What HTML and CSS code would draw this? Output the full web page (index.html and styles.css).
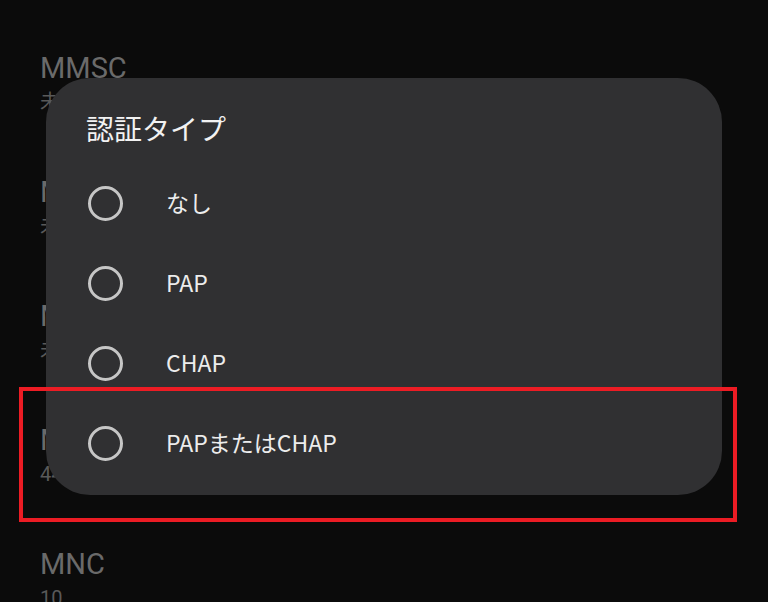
FILE: index.html
```html
<!DOCTYPE html>
<html lang="ja">
<head>
<meta charset="utf-8">
<link rel="stylesheet" href="styles.css">
</head>
<body>
<div class="screen">
  <ul class="settings">
    <li class="setting"><div class="label">MMSC</div><div class="value">未設定</div></li>
    <li class="setting"><div class="label">MMSプロキシ</div><div class="value">未設定</div></li>
    <li class="setting"><div class="label">MMSポート</div><div class="value">未設定</div></li>
    <li class="setting"><div class="label">MCC</div><div class="value">440</div></li>
    <li class="setting"><div class="label">MNC</div><div class="value">10</div></li>
  </ul>

  <div class="dialog">
    <h2 class="dialog-title">認証タイプ</h2>
    <ul class="options">
      <li class="option"><span class="radio"></span><span class="option-text">なし</span></li>
      <li class="option"><span class="radio"></span><span class="option-text">PAP</span></li>
      <li class="option"><span class="radio"></span><span class="option-text">CHAP</span></li>
      <li class="option"><span class="radio"></span><span class="option-text">PAPまたはCHAP</span></li>
    </ul>
  </div>

  <div class="highlight"></div>
</div>
</body>
</html>
```

FILE: styles.css
```css
* { box-sizing: border-box; }

html, body {
  margin: 0;
  padding: 0;
  background: #0b0b0b;
}

.screen {
  position: relative;
  width: 768px;
  height: 602px;
  overflow: hidden;
  background: #0b0b0b;
  font-family: Roboto, "Noto Sans CJK JP", sans-serif;
}

.settings {
  list-style: none;
  margin: 0;
  padding: 50px 0 0 40px;
  display: flex;
  flex-direction: column;
}

.setting {
  height: 124px;
}

.label {
  font-size: 29px;
  line-height: 36px;
  color: #6a6a6a;
}

.value {
  margin-top: 2px;
  font-size: 20px;
  line-height: 28px;
  color: #595959;
}

.dialog {
  position: absolute;
  left: 46px;
  top: 78px;
  width: 676px;
  height: 417px;
  background: #303032;
  border-radius: 44px;
  padding: 28px 0 0 0;
  display: flex;
  flex-direction: column;
}

.dialog-title {
  margin: 0;
  padding-left: 40px;
  font-family: "Noto Sans CJK JP", sans-serif;
  font-weight: 400;
  font-size: 28px;
  line-height: 44px;
  color: #f2f2f2;
}

.options {
  list-style: none;
  margin: 13px 0 0 0;
  padding: 0;
  display: flex;
  flex-direction: column;
}

.option {
  height: 80px;
  display: flex;
  align-items: center;
  padding-left: 42px;
}

.radio {
  width: 35px;
  height: 35px;
  border: 3px solid #c6c6c6;
  border-radius: 50%;
  flex: none;
}

.option-text {
  margin-left: 43px;
  padding-bottom: 3px;
  font-family: "Noto Sans CJK JP", sans-serif;
  font-size: 23px;
  line-height: 32px;
  color: #ececec;
}

.highlight {
  position: absolute;
  left: 19px;
  top: 387px;
  width: 718px;
  height: 135px;
  border: 4px solid #ec1c24;
}
```
